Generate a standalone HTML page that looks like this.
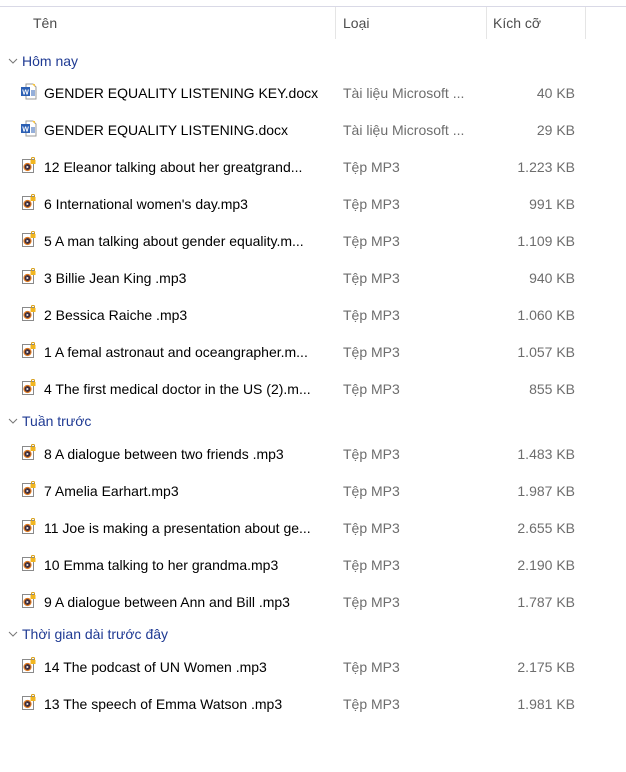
<!DOCTYPE html><html><head><meta charset="utf-8"><style>
body{margin:0;width:626px;height:772px;background:#fff;font-family:"Liberation Sans",sans-serif;position:relative;overflow:hidden}
.a{position:absolute;white-space:nowrap}
.top{position:absolute;left:0;top:6px;width:626px;height:1px;background:#d9d9e6}
.div{position:absolute;top:7px;width:1px;height:32px;background:#e5e5e5}
.h{position:absolute;top:15px;font-size:14px;color:#4c4c4c}
.g{position:absolute;left:8px;font-size:14px;color:#1f3a93}
.g svg{position:absolute;left:0;top:4px}
.g span{margin-left:14px}
.n{position:absolute;left:44px;font-size:14px;color:#000;width:280px;overflow:hidden}
.t{position:absolute;left:343px;font-size:14px;color:#6d6d6d}
.s{position:absolute;right:51px;font-size:14px;color:#6d6d6d;text-align:right}
.ic{position:absolute;left:21px}
</style></head><body>
<div class="top"></div>
<div class="div" style="left:335px"></div><div class="div" style="left:486px"></div><div class="div" style="left:585px"></div>
<div class="h" style="left:33px">Tên</div><div class="h" style="left:343px">Loại</div><div class="h" style="left:493px">Kích cỡ</div>
<div id="c"></div>
<script>
var W='<svg width="16" height="17" viewBox="0 0 16 17"><path d="M5 1h7l3 3v12H5z" fill="#fff" stroke="#9a9a9a"/><path d="M11 1h3v3" fill="#f6c443"/><rect x="0" y="4" width="9" height="9" fill="#2b5fb4"/><text x="4.5" y="11.5" font-size="7" font-family="Liberation Sans" font-weight="bold" fill="#fff" text-anchor="middle">W</text><path d="M10 8h4M10 10h4M10 12h4" stroke="#2b5fb4"/></svg>';
var M='<svg width="16" height="17" viewBox="0 0 16 17"><path d="M1.5 2.5h11v13h-11z" fill="#fff" stroke="#8a8a8a"/><circle cx="6.5" cy="10" r="3.5" fill="#3a2a3a" stroke="#e07a20" stroke-width="1.2"/><path d="M5.6 8.6l2.2 1.4-2.2 1.4z" fill="#fff"/><rect x="9.5" y="3" width="5" height="4" fill="#f2b620"/><path d="M10.5 3V1.8a1.5 1.5 0 0 1 3 0V3" fill="none" stroke="#d49a10"/></svg>';
var rows=[['g','Hôm nay',61],['w','GENDER EQUALITY LISTENING KEY.docx','Tài liệu Microsoft ...','40 KB',93],['w','GENDER EQUALITY LISTENING.docx','Tài liệu Microsoft ...','29 KB',130],
['m','12 Eleanor talking about her greatgrand...','Tệp MP3','1.223 KB',167],['m',"6 International women's day.mp3",'Tệp MP3','991 KB',204],['m','5 A man talking about gender equality.m...','Tệp MP3','1.109 KB',241],['m','3 Billie Jean King .mp3','Tệp MP3','940 KB',278],['m','2 Bessica Raiche .mp3','Tệp MP3','1.060 KB',315],['m','1 A femal astronaut and oceangrapher.m...','Tệp MP3','1.057 KB',352],['m','4 The first medical doctor in the US (2).m...','Tệp MP3','855 KB',389],
['g','Tuần trước',421],['m','8 A dialogue between two friends .mp3','Tệp MP3','1.483 KB',454],['m','7 Amelia Earhart.mp3','Tệp MP3','1.987 KB',491],['m','11 Joe is making a presentation about ge...','Tệp MP3','2.655 KB',528],['m','10 Emma talking to her grandma.mp3','Tệp MP3','2.190 KB',565],['m','9 A dialogue between Ann and Bill .mp3','Tệp MP3','1.787 KB',602],
['g','Thời gian dài trước đây',634],['m','14 The podcast of UN Women .mp3','Tệp MP3','2.175 KB',667],['m','13 The speech of Emma Watson .mp3','Tệp MP3','1.981 KB',704]];
var h='';rows.forEach(function(r){if(r[0]=='g'){var y=r[2]-8;h+='<div class="g" style="top:'+y+'px"><svg width="10" height="8"><path d="M1 2l4 4 4-4" fill="none" stroke="#777"/></svg><span>'+r[1]+'</span></div>';}else{var y=r[4]-8;h+='<div class="ic" style="top:'+(r[4]-10)+'px">'+(r[0]=='w'?W:M)+'</div><div class="n" style="top:'+y+'px">'+r[1]+'</div><div class="t" style="top:'+y+'px">'+r[2]+'</div><div class="s" style="top:'+y+'px">'+r[3]+'</div>';}});
document.getElementById('c').innerHTML=h;
</script>
</body></html>
